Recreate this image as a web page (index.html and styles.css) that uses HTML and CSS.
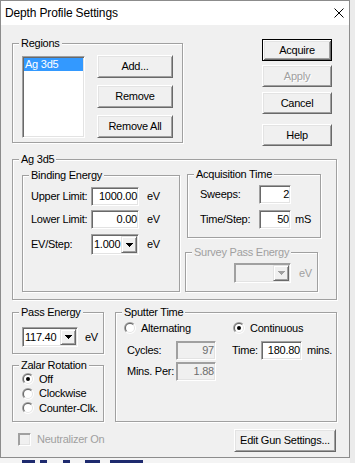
FILE: index.html
```html
<!DOCTYPE html>
<html>
<head>
<meta charset="utf-8">
<title>Depth Profile Settings</title>
<link rel="stylesheet" href="styles.css">
</head>
<body>
<div class="window">
  <div class="titlebar">
    <span class="title">Depth Profile Settings</span>
    <svg class="close" width="10" height="10" viewBox="0 0 10 10"><path d="M0.5 0.5L9.5 9.5M9.5 0.5L0.5 9.5" stroke="#000" stroke-width="1" fill="none"/></svg>
  </div>
  <div class="client">
    <div class="row1">
      <div class="group regions">
        <div class="legend">Regions</div>
        <div class="regions-body">
          <div class="listbox"><div class="lbitem">Ag 3d5</div></div>
          <div class="btncol">
            <div class="btn rbtn">Add...</div>
            <div class="btn rbtn">Remove</div>
            <div class="btn rbtn">Remove All</div>
          </div>
        </div>
      </div>
      <div class="sidecol">
        <div class="btn sbtn default">Acquire</div>
        <div class="btn sbtn disabled apply">Apply</div>
        <div class="btn sbtn cancel">Cancel</div>
        <div class="btn sbtn help">Help</div>
      </div>
    </div>

    <div class="group ag">
      <div class="legend">Ag 3d5</div>
      <div class="ag-body">
        <div class="group binding">
          <div class="legend">Binding Energy</div>
          <div class="binding-body">
            <div class="frow">
              <span class="lbl lbl-be">Upper Limit:</span>
              <span class="field f-be">1000.00</span>
              <span class="unit u-be">eV</span>
            </div>
            <div class="frow gap4">
              <span class="lbl lbl-be">Lower Limit:</span>
              <span class="field f-be">0.00</span>
              <span class="unit u-be">eV</span>
            </div>
            <div class="frow gap5 tall">
              <span class="lbl lbl-be">EV/Step:</span>
              <span class="combo c-be">
                <span class="cval">1.000</span>
                <span class="drop"><svg width="7" height="4" viewBox="0 0 7 4"><g fill="#000"><rect x="0" y="0" width="7" height="1"/><rect x="1" y="1" width="5" height="1"/><rect x="2" y="2" width="3" height="1"/><rect x="3" y="3" width="1" height="1"/></g></svg></span>
              </span>
              <span class="unit u-be">eV</span>
            </div>
          </div>
        </div>
        <div class="agright">
          <div class="group acq">
            <div class="legend">Acquisition Time</div>
            <div class="acq-body">
              <div class="frow">
                <span class="lbl lbl-acq">Sweeps:</span>
                <span class="field f-acq">2</span>
              </div>
              <div class="frow gap6">
                <span class="lbl lbl-acq">Time/Step:</span>
                <span class="field f-acq">50</span>
                <span class="unit u-acq">mS</span>
              </div>
            </div>
          </div>
          <div class="group survey">
            <div class="legend dis">Survey Pass Energy</div>
            <div class="survey-body">
              <span class="combo c-sv disabledc">
                <span class="cval"></span>
                <span class="drop"><svg width="7" height="4" viewBox="0 0 7 4"><g fill="#a0a0a0"><rect x="0" y="0" width="7" height="1"/><rect x="1" y="1" width="5" height="1"/><rect x="2" y="2" width="3" height="1"/><rect x="3" y="3" width="1" height="1"/></g></svg></span>
              </span>
              <span class="unit u-sv dis">eV</span>
            </div>
          </div>
        </div>
      </div>
    </div>

    <div class="row3">
      <div class="leftcol">
        <div class="group pass">
          <div class="legend">Pass Energy</div>
          <div class="pass-body">
            <span class="combo c-pe">
              <span class="cval">117.40</span>
              <span class="drop"><svg width="7" height="4" viewBox="0 0 7 4"><g fill="#000"><rect x="0" y="0" width="7" height="1"/><rect x="1" y="1" width="5" height="1"/><rect x="2" y="2" width="3" height="1"/><rect x="3" y="3" width="1" height="1"/></g></svg></span>
            </span>
            <span class="unit u-pe">eV</span>
          </div>
        </div>
        <div class="group zalar">
          <div class="legend">Zalar Rotation</div>
          <div class="zalar-body">
            <div class="radio zr">
              <svg class="rb" width="12" height="12" viewBox="0 0 12 12"><path d="M10.243 1.757A6 6 0 0 0 1.757 10.243Z" fill="#a0a0a0"/><path d="M1.757 10.243A6 6 0 0 0 10.243 1.757Z" fill="#fff"/><path d="M9.536 2.464A5 5 0 0 0 2.464 9.536Z" fill="#696969"/><path d="M2.464 9.536A5 5 0 0 0 9.536 2.464Z" fill="#e3e3e3"/><circle cx="6" cy="6" r="4" fill="#fff"/><circle cx="6" cy="6" r="2" fill="#000"/></svg>
              <span class="rtext">Off</span>
            </div>
            <div class="radio zr">
              <svg class="rb" width="12" height="12" viewBox="0 0 12 12"><path d="M10.243 1.757A6 6 0 0 0 1.757 10.243Z" fill="#a0a0a0"/><path d="M1.757 10.243A6 6 0 0 0 10.243 1.757Z" fill="#fff"/><path d="M9.536 2.464A5 5 0 0 0 2.464 9.536Z" fill="#696969"/><path d="M2.464 9.536A5 5 0 0 0 9.536 2.464Z" fill="#e3e3e3"/><circle cx="6" cy="6" r="4" fill="#fff"/></svg>
              <span class="rtext">Clockwise</span>
            </div>
            <div class="radio zr">
              <svg class="rb" width="12" height="12" viewBox="0 0 12 12"><path d="M10.243 1.757A6 6 0 0 0 1.757 10.243Z" fill="#a0a0a0"/><path d="M1.757 10.243A6 6 0 0 0 10.243 1.757Z" fill="#fff"/><path d="M9.536 2.464A5 5 0 0 0 2.464 9.536Z" fill="#696969"/><path d="M2.464 9.536A5 5 0 0 0 9.536 2.464Z" fill="#e3e3e3"/><circle cx="6" cy="6" r="4" fill="#fff"/></svg>
              <span class="rtext">Counter-Clk.</span>
            </div>
          </div>
        </div>
        <div class="checkrow">
          <span class="checkbox"></span>
          <span class="ctext dis">Neutralizer On</span>
        </div>
      </div>
      <div class="rightcol">
        <div class="group sputter">
          <div class="legend">Sputter Time</div>
          <div class="sputter-body">
            <div class="sprow">
              <div class="radio alt">
                <svg class="rb" width="12" height="12" viewBox="0 0 12 12"><path d="M10.243 1.757A6 6 0 0 0 1.757 10.243Z" fill="#a0a0a0"/><path d="M1.757 10.243A6 6 0 0 0 10.243 1.757Z" fill="#fff"/><path d="M9.536 2.464A5 5 0 0 0 2.464 9.536Z" fill="#696969"/><path d="M2.464 9.536A5 5 0 0 0 9.536 2.464Z" fill="#e3e3e3"/><circle cx="6" cy="6" r="4" fill="#fff"/></svg>
                <span class="rtext">Alternating</span>
              </div>
              <div class="radio">
                <svg class="rb" width="12" height="12" viewBox="0 0 12 12"><path d="M10.243 1.757A6 6 0 0 0 1.757 10.243Z" fill="#a0a0a0"/><path d="M1.757 10.243A6 6 0 0 0 10.243 1.757Z" fill="#fff"/><path d="M9.536 2.464A5 5 0 0 0 2.464 9.536Z" fill="#696969"/><path d="M2.464 9.536A5 5 0 0 0 9.536 2.464Z" fill="#e3e3e3"/><circle cx="6" cy="6" r="4" fill="#fff"/><circle cx="6" cy="6" r="2" fill="#000"/></svg>
                <span class="rtext">Continuous</span>
              </div>
            </div>
            <div class="frow sprow2">
              <span class="lbl lbl-sp">Cycles:</span>
              <span class="field f-sp disf">97</span>
              <span class="lbl lbl-time">Time:</span>
              <span class="field f-time">180.80</span>
              <span class="unit u-time">mins.</span>
            </div>
            <div class="frow sprow3">
              <span class="lbl lbl-sp">Mins. Per:</span>
              <span class="field f-sp disf">1.88</span>
            </div>
          </div>
        </div>
        <div class="btn editbtn">Edit Gun Settings...</div>
      </div>
    </div>
  </div>
</div>
<div class="desk">
  <span class="mk mk1"></span><span class="mk mk2"></span><span class="mk mk3"></span><span class="mk mk4"></span><span class="mk mk5"></span>
</div>
</body>
</html>
```
FILE: styles.css
```css
* { box-sizing: border-box; }
html, body { margin: 0; padding: 0; }
body {
  width: 355px;
  height: 463px;
  overflow: hidden;
  background: #ebebeb;
  font-family: "Liberation Sans", Arial, sans-serif;
  font-size: 11px;
  line-height: 13px;
  letter-spacing: -0.25px;
  color: #000;
}
.window {
  width: 350px;
  height: 458px;
  border: 1px solid #8c8c8c;
  background: #f0f0f0;
  display: flex;
  flex-direction: column;
}
.titlebar {
  flex: none;
  height: 24px;
  background: #fff;
  display: flex;
  align-items: center;
  padding-left: 4px;
}
.title { font-size: 12px; letter-spacing: -0.15px; }
.close { display: block; margin-left: auto; margin-right: 5px; }
.client { flex: 1; padding-left: 11px; overflow: hidden; }

/* group boxes */
.group {
  border: 1px solid #a0a0a0;
  box-shadow: inset 1px 1px 0 #fff, 1px 1px 0 #fff;
}
.legend {
  display: table;
  margin: -7px 0 -6px 6px;
  padding: 0 2px;
  background: #f0f0f0;
  line-height: 13px;
  white-space: nowrap;
}
.dis { color: #a0a0a0; }

/* controls */
.btn {
  border: 1px solid;
  border-color: #fff #696969 #696969 #fff;
  box-shadow: inset 1px 1px 0 #e3e3e3, inset -1px -1px 0 #a0a0a0;
  background: #f0f0f0;
  display: flex;
  align-items: center;
  justify-content: center;
  white-space: nowrap;
}
.btn.default {
  border: 1px solid #000;
  box-shadow: inset 1px 1px 0 #fff, inset -1px -1px 0 #696969, inset 2px 2px 0 #e3e3e3, inset -2px -2px 0 #a0a0a0;
}
.btn.disabled { color: #a0a0a0; text-shadow: 1px 1px 0 #fff; }

.field {
  display: flex;
  align-items: center;
  justify-content: flex-end;
  padding-right: 1px;
  border: 1px solid;
  border-color: #a0a0a0 #fff #fff #a0a0a0;
  box-shadow: inset 1px 1px 0 #696969, inset -1px -1px 0 #e3e3e3;
  background: #fff;
  white-space: nowrap;
}
.field.disf { background: #f0f0f0; color: #6d6d6d; box-shadow: inset 1px 1px 0 #a0a0a0, inset -1px -1px 0 #e3e3e3; }

.combo {
  display: flex;
  border: 1px solid;
  border-color: #a0a0a0 #fff #fff #a0a0a0;
  box-shadow: inset 1px 1px 0 #696969, inset -1px -1px 0 #e3e3e3;
  background: #fff;
  padding: 1px;
}
.combo.disabledc { background: #f0f0f0; box-shadow: inset 1px 1px 0 #a0a0a0, inset -1px -1px 0 #e3e3e3; }
.cval { flex: 1; display: flex; align-items: center; padding-left: 1px; white-space: nowrap; }
.drop {
  flex: none;
  width: 16px;
  display: flex;
  align-items: center;
  justify-content: center;
  border: 1px solid;
  border-color: #e3e3e3 #696969 #696969 #e3e3e3;
  box-shadow: inset 1px 1px 0 #fff, inset -1px -1px 0 #a0a0a0;
  background: #f0f0f0;
}
.drop svg { display: block; }

.frow { display: flex; align-items: center; height: 19px; }
.frow.tall { height: 21px; }
.frow.gap4 { margin-top: 4px; }
.frow.gap5 { margin-top: 5px; }
.frow.gap6 { margin-top: 6px; }
.lbl { flex: none; white-space: nowrap; }
.frow .field, .frow .combo { height: 100%; }
.unit { white-space: nowrap; }

.radio { display: flex; align-items: center; }
.rb { display: block; flex: none; }
.rtext { margin-left: 5px; white-space: nowrap; }

/* row 1 */
.row1 { display: flex; align-items: flex-start; margin-top: 14px; }
.regions { width: 171px; height: 100px; margin-top: 4px; }
.regions-body { display: flex; align-items: flex-start; padding: 12px 0 0 9px; }
.listbox {
  width: 63px;
  height: 82px;
  border: 1px solid;
  border-color: #a0a0a0 #fff #fff #a0a0a0;
  box-shadow: inset 1px 1px 0 #696969, inset -1px -1px 0 #e3e3e3;
  background: #fff;
  padding: 1px;
}
.lbitem {
  background: #3399ff;
  color: #fff;
  height: 13px;
  line-height: 13px;
  padding-left: 1px;
}
.btncol { display: flex; flex-direction: column; gap: 7px; margin: -1px 0 0 12px; }
.rbtn { width: 76px; height: 23px; }
.sidecol { display: flex; flex-direction: column; margin-left: 79px; }
.sbtn { width: 70px; height: 22px; }
.apply { margin-top: 4px; }
.cancel { margin-top: 5px; }
.help { margin-top: 10px; }

/* row 2 */
.ag { width: 325px; height: 141px; margin-top: 13px; }
.ag-body { display: flex; align-items: flex-start; padding: 14px 0 0 9px; }
.binding { width: 158px; height: 117px; margin-top: 1px; }
.binding-body { padding: 11px 0 0 8px; }
.lbl-be { width: 60px; }
.f-be, .c-be { width: 48px; }
.u-be { margin-left: 8px; }
.agright { display: flex; flex-direction: column; margin-left: 5px; }
.acq { width: 134px; height: 64px; margin-left: 2px; }
.acq-body { padding: 10px 0 0 12px; }
.lbl-acq { width: 59px; }
.f-acq { width: 32px; }
.u-acq { margin-left: 4px; }
.survey { width: 133px; height: 40px; margin-top: 14px; }
.survey-body { display: flex; align-items: center; padding: 10px 0 0 48px; }
.c-sv { width: 57px; height: 20px; }
.u-sv { margin-left: 8px; }

/* row 3 */
.row3 { display: flex; align-items: flex-start; margin-top: 12px; }
.leftcol { width: 92px; display: flex; flex-direction: column; }
.pass { width: 92px; height: 42px; }
.pass-body { display: flex; align-items: center; padding: 14px 0 0 9px; }
.c-pe { width: 56px; height: 20px; }
.u-pe { margin-left: 7px; }
.zalar { width: 92px; height: 57px; margin-top: 11px; }
.zalar-body { padding: 6px 0 0 9px; }
.zr { height: 14.5px; }
.checkrow { display: flex; align-items: center; height: 13px; margin: 11px 0 0 6px; }
.checkbox {
  width: 13px;
  height: 13px;
  flex: none;
  border: 1px solid;
  border-color: #a0a0a0 #fff #fff #a0a0a0;
  box-shadow: inset 1px 1px 0 #a0a0a0, inset -1px -1px 0 #e3e3e3;
  background: #f0f0f0;
}
.ctext { margin-left: 6px; white-space: nowrap; }

.rightcol { width: 222px; margin-left: 11px; display: flex; flex-direction: column; }
.sputter { width: 222px; height: 110px; }
.sputter-body { padding: 8px 0 0 8px; }
.sprow { display: flex; align-items: center; height: 14px; }
.alt { width: 109px; }
.sprow2 { margin-top: 6px; padding-left: 3px; }
.sprow3 { margin-top: 2px; padding-left: 3px; }
.lbl-sp { width: 49px; }
.f-sp { width: 40px; }
.lbl-time { width: 29px; margin-left: 16px; }
.f-time { width: 41px; }
.u-time { margin-left: 5px; }
.editbtn { width: 102px; height: 23px; margin: 7px 0 0 119px; }

/* desktop strip below the window */
.desk { display: flex; align-items: flex-end; height: 5px; width: 350px; background: #f4f4f4; }
.mk { height: 3px; background: #1e2a6e; }
.mk1 { width: 13px; margin-left: 22px; }
.mk2 { width: 7px; margin-left: 5px; }
.mk3 { width: 7px; margin-left: 16px; }
.mk4 { width: 15px; margin-left: 15px; }
.mk5 { width: 33px; margin-left: 10px; }
```
